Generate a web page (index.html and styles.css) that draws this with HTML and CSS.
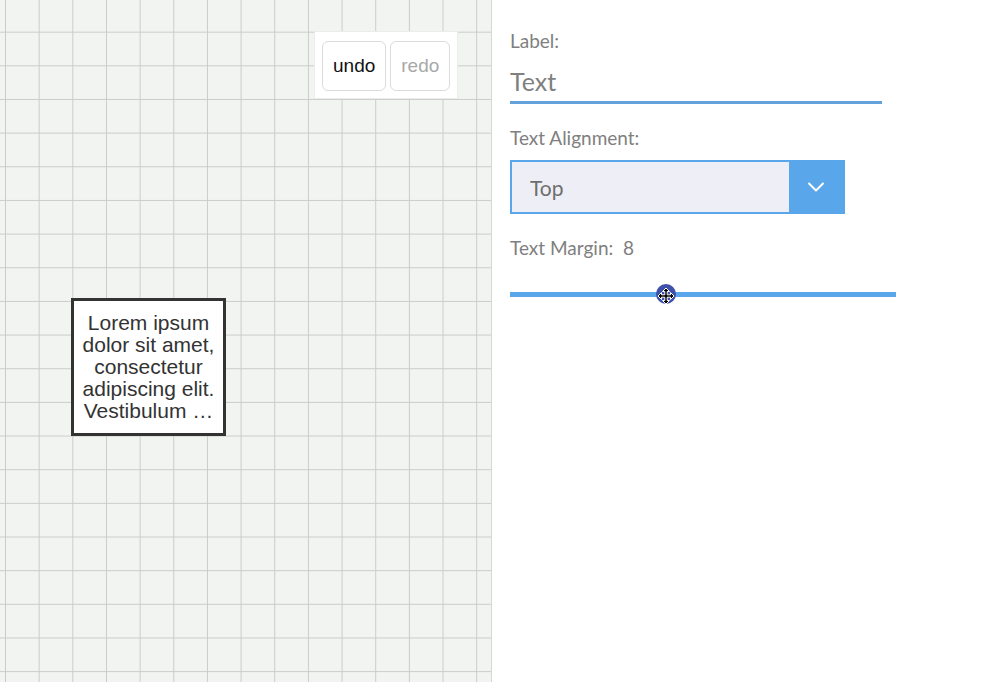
FILE: index.html
```html
<!DOCTYPE html>
<html>
<head>
  <meta charset="UTF-8">
  <meta name="viewport" content="width=device-width, initial-scale=1.0">
  <title>Diagram Editor</title>
  <link rel="stylesheet" href="styles.css">
</head>
<body>
  <div class="canvas">
    <div class="toolbar">
      <button class="tool-button">undo</button>
      <button class="tool-button disabled">redo</button>
    </div>

    <div class="node">
      Lorem ipsum dolor sit amet, consectetur adipiscing elit. Vestibulum …
    </div>
  </div>

  <div class="panel">
    <div class="field-label">Label:</div>
    <div class="text-input">Text</div>

    <div class="field-label spaced">Text Alignment:</div>
    <div class="select">
      <div class="select-value">Top</div>
      <div class="select-arrow">
        <svg viewBox="0 0 20 12" width="20" height="12">
          <path d="M3 2.5 L10 9.5 L17 2.5" fill="none" stroke="#ffffff" stroke-width="2" stroke-linecap="round" stroke-linejoin="round"/>
        </svg>
      </div>
    </div>

    <div class="field-label spaced">Text Margin:&nbsp; 8</div>
    <div class="slider">
      <div class="slider-track"></div>
      <div class="slider-thumb"></div>
      <svg class="move-cursor" viewBox="0 0 18 18" width="18" height="18">
        <path d="M9 1 L12.5 4.5 L10.2 4.5 L10.2 7.8 L13.5 7.8 L13.5 5.5 L17 9 L13.5 12.5 L13.5 10.2 L10.2 10.2 L10.2 13.5 L12.5 13.5 L9 17 L5.5 13.5 L7.8 13.5 L7.8 10.2 L4.5 10.2 L4.5 12.5 L1 9 L4.5 5.5 L4.5 7.8 L7.8 7.8 L7.8 4.5 L5.5 4.5 Z" fill="#000000" stroke="#ffffff" stroke-width="1" stroke-linejoin="round"/>
      </svg>
    </div>
  </div>
</body>
</html>
```

FILE: styles.css
```css
:root {
  --accent-color: #5aa6ea;
  --accent-dark: #3f51a8;
  --label-color: #808080;
  --grid-line: #c9cdc9;
  --grid-background: #f2f4f2;
}

body {
  margin: 0;
  padding: 0;
  height: 100vh;
  display: flex;
  overflow: hidden;
  background-color: #ffffff;
  font-family: Lato, 'Open Sans', sans-serif;
}

.canvas {
  position: relative;
  width: 491px;
  flex-shrink: 0;
  border-right: 1px solid #d6d8d6;
  background-color: var(--grid-background);
  background-image:
    linear-gradient(to right, var(--grid-line) 1px, transparent 1px),
    linear-gradient(to bottom, var(--grid-line) 1px, transparent 1px);
  background-size: 33.67px 33.67px;
  background-position: 5px -2px;
}

.toolbar {
  position: absolute;
  top: 31px;
  left: 314px;
  display: flex;
  gap: 4px;
  padding: 9px 7px 7px 7px;
  background-color: #ffffff;
  border: 1px solid #ececec;
}

.tool-button {
  height: 50px;
  padding: 0 10px;
  background-color: #ffffff;
  border: 1px solid #dcdcdc;
  border-radius: 6px;
  font-family: 'Liberation Sans', Arial, sans-serif;
  font-size: 19px;
  color: #111111;
  cursor: pointer;
}

.tool-button.disabled {
  color: #a8a8a8;
}

.node {
  position: absolute;
  top: 298px;
  left: 71px;
  box-sizing: border-box;
  width: 155px;
  height: 138px;
  padding-top: 11px;
  border: 3px solid #333333;
  background-color: #ffffff;
  font-family: 'Liberation Sans', Arial, sans-serif;
  font-size: 21px;
  line-height: 22px;
  color: #333333;
  text-align: center;
}

.panel {
  flex: 1;
  padding: 30px 0 0 18px;
}

.field-label {
  font-size: 19px;
  line-height: 22px;
  color: var(--label-color);
}

.field-label.spaced {
  margin-top: 23px;
}

.text-input {
  width: 372px;
  padding: 14px 0 5px 0;
  font-size: 25px;
  line-height: 30px;
  color: #808080;
  border-bottom: 3px solid #64a2dc;
}

.select {
  display: flex;
  width: 335px;
  height: 54px;
  margin-top: 11px;
  box-sizing: border-box;
  border: 2px solid var(--accent-color);
  background-color: #eeeff6;
}

.select-value {
  flex: 1;
  display: flex;
  align-items: center;
  padding-left: 18px;
  font-size: 21px;
  color: #6e6e6e;
}

.select-arrow {
  width: 54px;
  display: flex;
  align-items: center;
  justify-content: center;
  background-color: var(--accent-color);
}

.slider {
  position: relative;
  width: 386px;
  height: 20px;
  margin-top: 25px;
  display: flex;
  align-items: center;
}

.slider-track {
  flex: 1;
  height: 5px;
  background-color: var(--accent-color);
}

.slider-thumb {
  position: absolute;
  left: 146px;
  top: 0;
  width: 20px;
  height: 20px;
  border-radius: 50%;
  background-color: var(--accent-dark);
}

.move-cursor {
  position: absolute;
  left: 147px;
  top: 3px;
}
```
